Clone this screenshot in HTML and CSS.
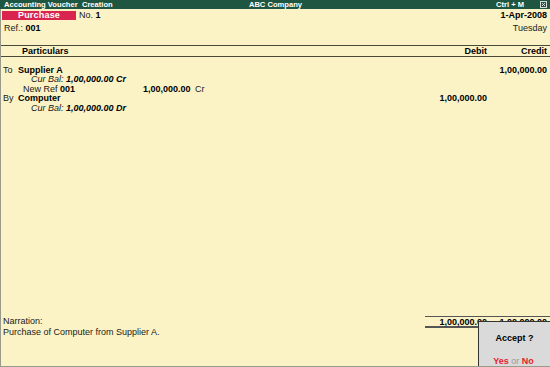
FILE: index.html
```html
<!DOCTYPE html>
<html>
<head>
<meta charset="utf-8">
<link rel="stylesheet" href="styles.css">
</head>
<body>
<div class="screen">
  <div class="titlebar">
    <span class="t-left">Accounting Voucher&nbsp; Creation</span>
    <span class="t-center">ABC Company</span>
    <span class="t-right">Ctrl + M <span class="close-box"><svg width="7" height="7" viewBox="0 0 7 7"><rect x="0.5" y="0.5" width="6" height="6" fill="none" stroke="#d8d8d8" stroke-width="1"/><path d="M2 2 L5 5 M5 2 L2 5" stroke="#d8d8d8" stroke-width="1"/></svg></span></span>
  </div>
  <div class="main">
    <div class="head">
      <div class="head-left">
        <div class="line1"><span class="badge">Purchase</span><span class="no">No. <b>1</b></span></div>
        <div class="line2">Ref.: <b>001</b></div>
      </div>
      <div class="head-right">
        <div class="line1"><b>1-Apr-2008</b></div>
        <div class="line2">Tuesday</div>
      </div>
    </div>
    <div class="colhead">
      <span class="c-part">Particulars</span>
      <span class="c-debit">Debit</span>
      <span class="c-credit">Credit</span>
    </div>
    <div class="entries">
      <div class="row"><span class="c-part"><span class="dc">To</span><b>Supplier A</b></span><span class="c-debit"></span><span class="c-credit"><b>1,00,000.00</b></span></div>
      <div class="row"><span class="c-part curbal">Cur Bal: <b>1,00,000.00 Cr</b></span></div>
      <div class="row"><span class="c-part billref"><span class="bref">New Ref <b>001</b></span><span class="bamt"><b>1,00,000.00</b> Cr</span></span></div>
      <div class="row"><span class="c-part"><span class="dc">By</span><b>Computer</b></span><span class="c-debit"><b>1,00,000.00</b></span><span class="c-credit"></span></div>
      <div class="row"><span class="c-part curbal">Cur Bal: <b>1,00,000.00 Dr</b></span></div>
    </div>
    <div class="foot">
      <div class="foot-row">
        <span class="c-part">Narration:</span>
        <span class="totals">
          <span class="c-debit"><b>1,00,000.00</b></span>
          <span class="c-credit"><b>1,00,000.00</b></span>
        </span>
      </div>
      <div class="foot-row narr">Purchase of Computer from Supplier A.</div>
    </div>
    <div class="accept">
      <div class="acc-q">Accept ?</div>
      <div class="acc-opts"><b class="red">Yes</b> <span class="or">or</span> <b class="red">No</b></div>
    </div>
  </div>
</div>
</body>
</html>
```
FILE: styles.css
```css
* { box-sizing: border-box; }
html, body { margin: 0; padding: 0; }
body {
  width: 550px;
  height: 367px;
  overflow: hidden;
  font-family: "Liberation Sans", Arial, sans-serif;
  font-size: 9px;
  color: #1a1a1a;
  background: #fbf3c6;
}
b { font-weight: bold; color: #000; }
.screen { width: 550px; height: 367px; display: flex; flex-direction: column; }
.titlebar {
  height: 9px;
  background: #1f5641;
  color: #fff;
  font-weight: bold;
  font-size: 7.6px;
  line-height: 9px;
  display: grid;
  grid-template-columns: 1fr auto 1fr;
  padding: 0 3px 0 4px;
  white-space: nowrap;
}
.t-center { text-align: center; }
.t-right { display: flex; justify-content: flex-end; align-items: center; }
.close-box { display: inline-flex; margin-left: 16px; }
.main {
  position: relative;
  flex: 1;
  border-left: 1px solid #9a9a8a;
  border-bottom: 1px solid #9a9a8a;
  display: flex;
  flex-direction: column;
}
.head {
  display: flex;
  justify-content: space-between;
  padding: 2px 3px 0 1px;
  height: 36px;
}
.line1 { height: 9px; line-height: 9px; display: flex; align-items: center; }
.line2 { height: 9px; line-height: 9px; margin-top: 4px; padding-left: 2px; }
.head-right .line2, .head-right .line1 { justify-content: flex-end; text-align: right; padding-left: 0; }
.badge {
  display: inline-block;
  width: 74px;
  height: 9px;
  background: #d8244f;
  color: #fff;
  font-weight: bold;
  text-align: center;
  line-height: 9px;
  letter-spacing: 0.2px;
}
.no { margin-left: 3px; }
.colhead {
  display: flex;
  height: 12px;
  line-height: 10px;
  border-top: 1.5px solid #4a4a3a;
  border-bottom: 1.5px solid #4a4a3a;
  font-weight: bold;
  color: #000;
}
.c-part { flex: 1; padding-left: 21px; }
.c-debit { width: 62px; text-align: right; }
.c-credit { width: 63px; text-align: right; padding-right: 3px; }
.entries { padding-top: 9px; }
.row { display: flex; height: 9.4px; line-height: 9.4px; white-space: nowrap; }
.row .c-part { padding-left: 2px; }
.dc { display: inline-block; width: 15px; }
.row .curbal { padding-left: 30px; font-style: italic; }
.row .billref { padding-left: 22px; display: flex; }
.bref { width: 120px; }
.bamt b { margin-right: 2px; }
.foot { margin-top: auto; padding-bottom: 28px; }
.foot-row { display: flex; height: 11px; line-height: 11px; }
.foot-row .c-part { padding-left: 2px; }
.foot-row.narr { padding-left: 2px; line-height: 11px; }
.totals {
  display: flex;
  height: 12px;
  line-height: 11px;
  border-top: 1px solid #555;
  border-bottom: 2px solid #555;
}
.accept {
  position: absolute;
  right: 0;
  bottom: 0;
  width: 72px;
  height: 45px;
  background: #dadada;
  border: 1.5px solid #333;
  border-right: none;
  border-bottom: none;
  text-align: center;
}
.acc-q { font-weight: bold; margin-top: 11px; color: #000; }
.acc-opts { margin-top: 13px; padding-right: 2px; }
.red { color: #e8202a; }
.or { color: #999; }
```
